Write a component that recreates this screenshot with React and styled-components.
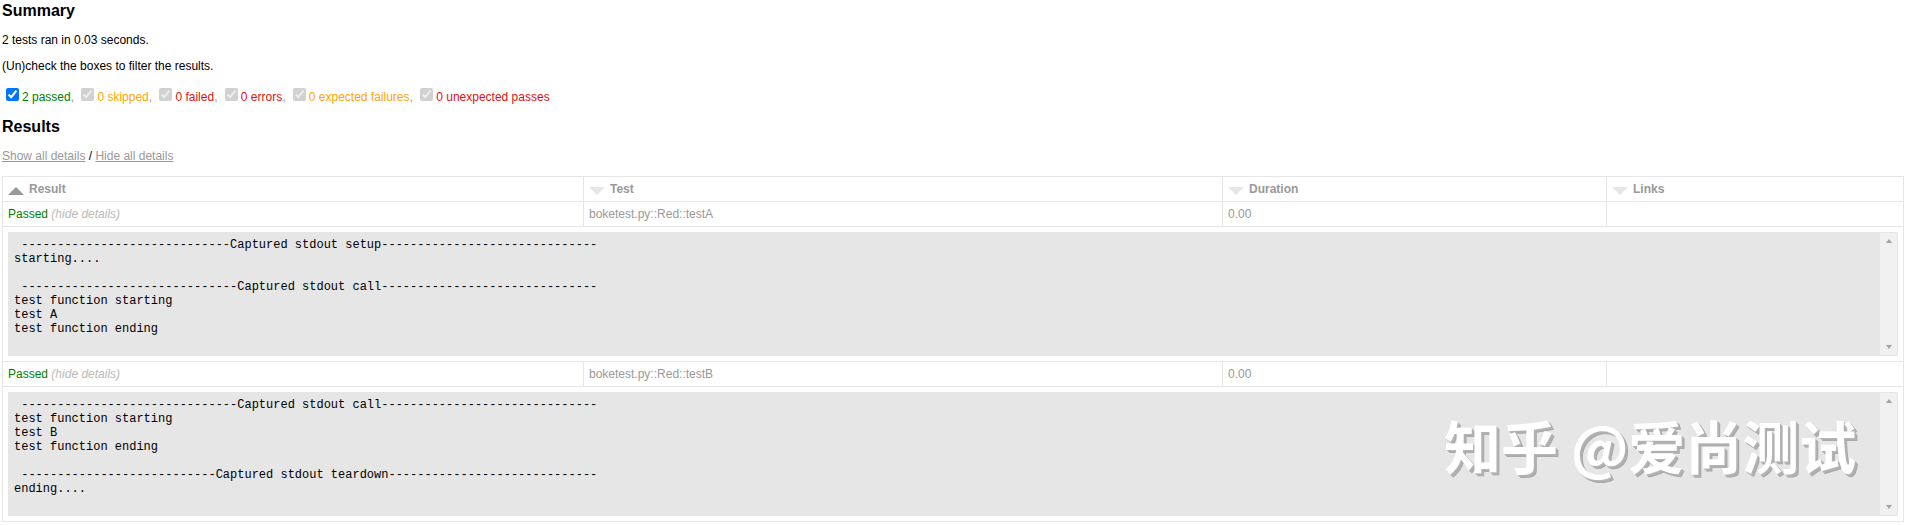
import React from "react";
import styled, { createGlobalStyle } from "styled-components";

const GlobalStyle = createGlobalStyle`
  html, body {
    margin: 0;
    padding: 0;
    background: #ffffff;
  }
  body {
    font-family: "Liberation Sans", Arial, Helvetica, sans-serif;
    font-size: 12px;
    color: #999;
    min-width: 1200px;
  }
`;

const Page = styled.div`
  padding: 2px 4px 0 2px;
`;

const Heading = styled.h2`
  font-size: 16px;
  font-weight: bold;
  color: black;
  margin: ${(p) => (p.$flush ? "0 0 0.83em" : "0.83em 0")};
`;

const Para = styled.p`
  color: black;
  margin: 12px 0;
`;

const Filters = styled.div`
  line-height: normal;
`;

const Checkbox = styled.input`
  margin: 3px 3px 3px 4px;
  vertical-align: baseline;
`;

const Outcome = styled.span`
  color: ${(p) => p.$color};
`;

const DetailLinks = styled.p`
  color: black;
  margin: 12px 0;
`;

const Link = styled.a`
  color: #999;
  text-decoration: underline;
  cursor: pointer;
`;

const TableWrap = styled.div`
  position: relative;
  padding-top: 1px;
`;

const ResultsTable = styled.table`
  border-collapse: collapse;
  border: 1px solid #e6e6e6;
  color: #999;
  font-size: 12px;
  width: 1901px;
  table-layout: fixed;
`;

const Col = styled.col`
  width: ${(p) => p.$w}px;
`;

const Th = styled.th`
  padding: 5px;
  border: 1px solid #e6e6e6;
  text-align: left;
  font-weight: bold;
  cursor: pointer;
`;

const SortIcon = styled.div`
  font-size: 0;
  float: left;
  margin-right: 5px;
  margin-top: 5px;
  width: 0;
  height: 0;
  border-left: 8px solid transparent;
  border-right: 8px solid transparent;
  ${(p) =>
    p.$active
      ? "border-bottom: 8px solid #999;"
      : "border-top: 8px solid #E6E6E6;"}
`;

const Td = styled.td`
  padding: 5px;
  border: 1px solid #e6e6e6;
  text-align: left;
  vertical-align: top;
`;

const ResultText = styled.span`
  color: green;
`;

const Collapser = styled.span`
  color: #bbb;
  font-style: italic;
  cursor: pointer;
`;

const Log = styled.div`
  display: flex;
  height: 122px;
  background-color: #e6e6e6;
  border: 1px solid #e6e6e6;
  overflow: hidden;
`;

const LogText = styled.div`
  flex: 1;
  padding: 5px;
  color: black;
  font-family: "Liberation Mono", "Courier New", Courier, monospace;
  font-size: 12px;
  white-space: pre-wrap;
`;

const ScrollTrack = styled.div`
  width: 17px;
  flex: none;
  display: flex;
  flex-direction: column;
  justify-content: space-between;
  align-items: center;
  background: #f0f0f0;
  padding: 6px 0;
`;

const ScrollArrow = styled.div`
  width: 0;
  height: 0;
  border-left: 3.5px solid transparent;
  border-right: 3.5px solid transparent;
  ${(p) =>
    p.$down
      ? "border-top: 4px solid #a3a3a3;"
      : "border-bottom: 4px solid #a3a3a3;"}
`;

const Watermark = styled.div`
  position: absolute;
  left: 1442px;
  top: 241px;
  font-family: "Noto Sans CJK SC", "Noto Sans", sans-serif;
  font-size: 57px;
  font-weight: 700;
  line-height: 1;
  color: #ffffff;
  white-space: nowrap;
  pointer-events: none;
  text-shadow: 1px 1px 0 #b4b4b4, 2px 2px 0 #b0b0b0, 3px 3px 0 #aaaaaa;
`;

const dash = (n) => "-".repeat(n);
const section = (title, left, right) => " " + dash(left) + title + dash(right);

const logA = [
  section("Captured stdout setup", 29, 30),
  "starting....",
  "",
  section("Captured stdout call", 30, 30),
  "test function starting",
  "test A",
  "test function ending",
  "",
].join("\n");

const logB = [
  section("Captured stdout call", 30, 30),
  "test function starting",
  "test B",
  "test function ending",
  "",
  section("Captured stdout teardown", 27, 29),
  "ending....",
  "",
].join("\n");

const outcomes = [
  { label: "2 passed", color: "green", disabled: false },
  { label: "0 skipped", color: "orange", disabled: true },
  { label: "0 failed", color: "#dd1111", disabled: true },
  { label: "0 errors", color: "#dd1111", disabled: true },
  { label: "0 expected failures", color: "orange", disabled: true },
  { label: "0 unexpected passes", color: "#dd1111", disabled: true },
];

const columns = [
  { name: "Result", width: 581, active: true },
  { name: "Test", width: 639, active: false },
  { name: "Duration", width: 384, active: false },
  { name: "Links", width: 297, active: false },
];

const results = [
  { name: "boketest.py::Red::testA", duration: "0.00", log: logA },
  { name: "boketest.py::Red::testB", duration: "0.00", log: logB },
];

export default function App() {
  return (
    <>
      <GlobalStyle />
      <Page>
        <Heading $flush>Summary</Heading>
        <Para>2 tests ran in 0.03 seconds. </Para>
        <Para>(Un)check the boxes to filter the results.</Para>
        <Filters>
          {outcomes.map((o, i) => (
            <React.Fragment key={o.label}>
              <Checkbox type="checkbox" defaultChecked disabled={o.disabled} />
              <Outcome $color={o.color}>{o.label}</Outcome>
              {i < outcomes.length - 1 ? ", " : ""}
            </React.Fragment>
          ))}
        </Filters>
        <Heading>Results</Heading>
        <DetailLinks>
          <Link>Show all details</Link> / <Link>Hide all details</Link>
        </DetailLinks>
        <TableWrap>
          <ResultsTable>
            <colgroup>
              {columns.map((c) => (
                <Col key={c.name} $w={c.width} />
              ))}
            </colgroup>
            <thead>
              <tr>
                {columns.map((c) => (
                  <Th key={c.name}>
                    <SortIcon $active={c.active} />
                    {c.name}
                  </Th>
                ))}
              </tr>
            </thead>
            {results.map((r) => (
              <tbody key={r.name}>
                <tr>
                  <Td>
                    <ResultText>Passed</ResultText>
                    <Collapser> (hide details)</Collapser>
                  </Td>
                  <Td>{r.name}</Td>
                  <Td>{r.duration}</Td>
                  <Td />
                </tr>
                <tr>
                  <Td colSpan={4}>
                    <Log>
                      <LogText>{r.log}</LogText>
                      <ScrollTrack>
                        <ScrollArrow />
                        <ScrollArrow $down />
                      </ScrollTrack>
                    </Log>
                  </Td>
                </tr>
              </tbody>
            ))}
          </ResultsTable>
          <Watermark>知乎 @爱尚测试</Watermark>
        </TableWrap>
      </Page>
    </>
  );
}
